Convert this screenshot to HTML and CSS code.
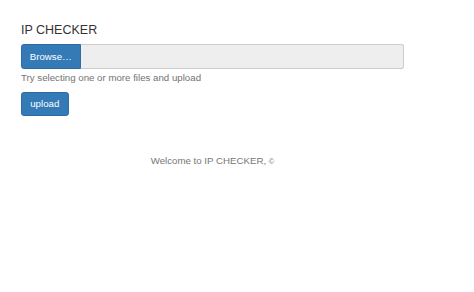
FILE: index.html
```html
<!DOCTYPE html>
<html>
<head>
<meta charset="utf-8">
<link rel="stylesheet" href="styles.css">
</head>
<body>
<div class="container">
  <h4 class="title">IP CHECKER</h4>
  <div class="input-group">
    <span class="btn btn-primary browse">Browse…</span>
    <div class="file-field"></div>
  </div>
  <p class="help">Try selecting one or more files and upload</p>
  <button class="btn btn-primary upload">upload</button>
  <footer class="footer">Welcome to IP CHECKER, <span class="copy">©</span></footer>
</div>
</body>
</html>
```

FILE: styles.css
```css
html, body {
  margin: 0;
  padding: 0;
  background: #fff;
}
body {
  font-family: "Liberation Sans", Arial, sans-serif;
  font-size: 9.7px;
  line-height: 13.8px;
  color: #333;
}
.container {
  width: 383px;
  padding-left: 21px;
  padding-top: 24px;
}
.title {
  margin: 0;
  font-size: 12.5px;
  font-weight: 400;
  line-height: 13.6px;
  color: #333;
}
.input-group {
  display: flex;
  margin-top: 6.7px;
  height: 24.4px;
}
.btn {
  box-sizing: border-box;
  font-family: "Liberation Sans", Arial, sans-serif;
  font-size: 9.7px;
  line-height: 13.8px;
  color: #fff;
  background: #337ab7;
  border: 0.7px solid #2e6da4;
  border-radius: 2.8px;
  display: flex;
  align-items: center;
  justify-content: center;
}
.browse {
  width: 59.5px;
  height: 24.4px;
  border-radius: 2.8px 0 0 2.8px;
}
.file-field {
  flex: 1;
  box-sizing: border-box;
  height: 24.4px;
  background: #eee;
  border: 0.7px solid #ccc;
  border-left: 0;
  border-radius: 0 2.8px 2.8px 0;
}
.help {
  margin: 2.5px 0 0;
  color: #737373;
}
.upload {
  margin-top: 7px;
  width: 47.5px;
  height: 23.6px;
  padding: 0;
}
.footer {
  margin-top: 38px;
  text-align: center;
  color: #777;
}
.copy {
  font-size: 7.5px;
}
```
